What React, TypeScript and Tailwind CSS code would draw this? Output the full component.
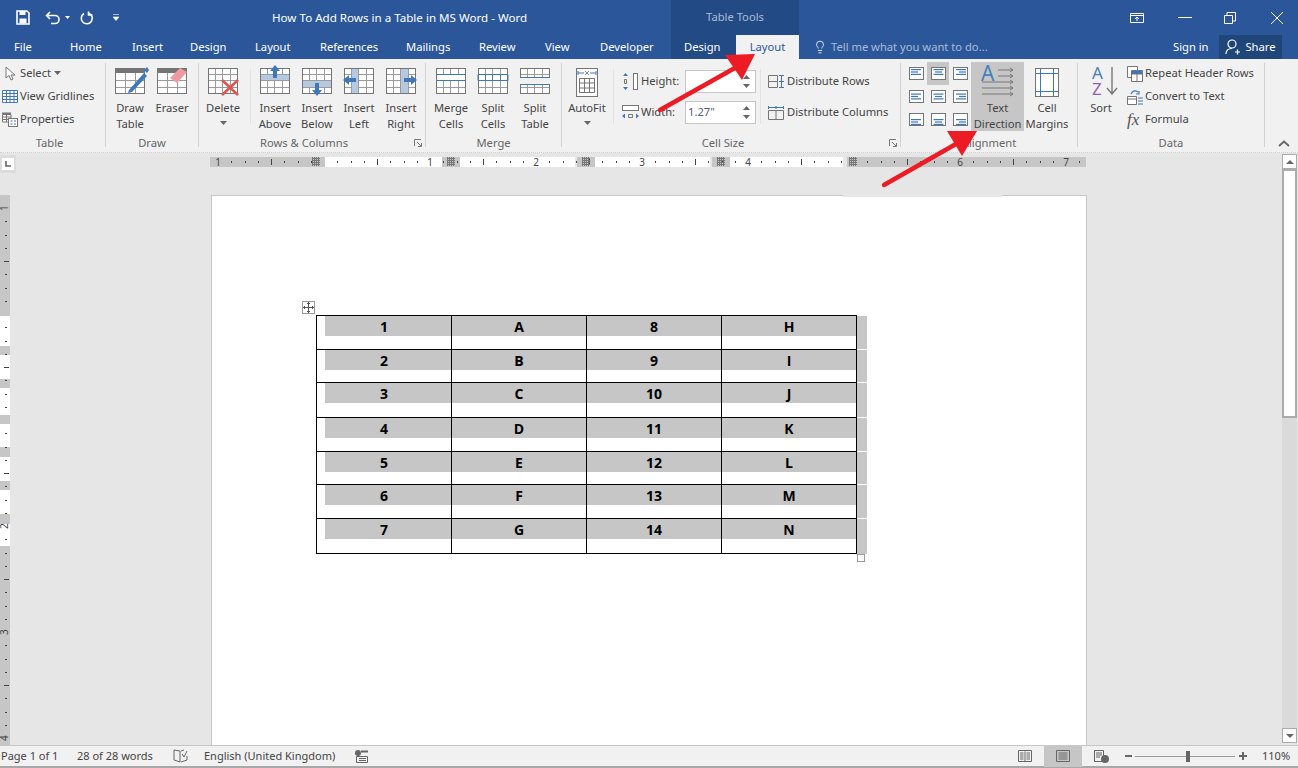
import type { ReactNode } from "react";
import { Lightbulb } from "lucide-react";

const tabs = [
  { label: "File", w: "w-[56px]" },
  { label: "Home", w: "w-[62px]" },
  { label: "Insert", w: "w-[58px]" },
  { label: "Design", w: "w-[65px]" },
  { label: "Layout", w: "w-[65px]" },
  { label: "References", w: "w-[86px]" },
  { label: "Mailings", w: "w-[73px]" },
  { label: "Review", w: "w-[66px]" },
  { label: "View", w: "w-[55px]" },
  { label: "Developer", w: "w-[71px]" },
];

const rows = [
  { h: "h-[34px]", cells: ["1", "A", "8", "H"] },
  { h: "h-[33px]", cells: ["2", "B", "9", "I"] },
  { h: "h-[35px]", cells: ["3", "C", "10", "J"] },
  { h: "h-[34px]", cells: ["4", "D", "11", "K"] },
  { h: "h-[33px]", cells: ["5", "E", "12", "L"] },
  { h: "h-[34px]", cells: ["6", "F", "13", "M"] },
  { h: "h-[36px]", cells: ["7", "G", "14", "N"] },
];

const GRAY = "#757575";
const BLUE = "#3f78b8";
const LIGHT = "#b5c9e0";

// plain table drawing used by most of the big ribbon buttons
function Grid({ children, header, simple }: { children?: ReactNode; header?: boolean; simple?: boolean }) {
  const vs = simple ? [10.5, 20.5] : [7.5, 14.5, 22.5];
  const hs = simple ? [12.5, 19.5] : [6.5, 12.5, 19.5];
  return (
    <svg width="30" height="27" viewBox="0 0 30 27" className="overflow-visible">
      <rect x="0.5" y="0.5" width="29" height="25" fill="#fff" stroke={GRAY} />
      {header && <rect x="0" y="0" width="30" height="5" fill={GRAY} />}
      {vs.map((x) => (
        <path key={x} d={`M${x} ${header ? 5 : 1}V25`} stroke="#9a9a9a" />
      ))}
      {hs.map((y) => (
        <path key={y} d={`M1 ${y}H29`} stroke="#9a9a9a" />
      ))}
      {children}
    </svg>
  );
}

function BigButton({ icon, lines, caret, w = "w-[42px]" }: { icon: ReactNode; lines: string[]; caret?: boolean; w?: string }) {
  return (
    <div className={`${w} flex flex-col items-center`}>
      <div className="h-[37px] pt-[5px] flex justify-center">{icon}</div>
      {lines.map((l) => (
        <div key={l} className="h-[16px] leading-[16px] whitespace-nowrap">
          {l}
        </div>
      ))}
      {caret && <Caret className="mt-[5px]" />}
    </div>
  );
}

function Caret({ className = "" }: { className?: string }) {
  return (
    <svg width="7" height="4" viewBox="0 0 7 4" className={className}>
      <path d="M0 0H7L3.5 4Z" fill="#666" />
    </svg>
  );
}

function SmallItem({ icon, label }: { icon: ReactNode; label: ReactNode }) {
  return (
    <div className="h-[23px] flex items-center whitespace-nowrap">
      <span className="w-[18px] flex items-center shrink-0">{icon}</span>
      {label}
    </div>
  );
}

function Group({ w, label, labelClass = "", launcher, children }: { w: string; label: string; labelClass?: string; launcher?: boolean; children: ReactNode }) {
  return (
    <div className={`${w} relative shrink-0`}>
      <div className="h-[72px] flex">{children}</div>
      <div className={`h-[16px] leading-[16px] text-center text-[#666] ${labelClass}`}>{label}</div>
      {launcher && (
        <svg width="8" height="8" viewBox="0 0 8 8" className="absolute right-[3px] bottom-[4px]">
          <path d="M0.5 7V0.5H7M3 3L7 7M4 7.5H7.5V4" fill="none" stroke="#777" />
        </svg>
      )}
    </div>
  );
}

function Sep() {
  return <div className="w-px h-[84px] bg-[#d2d2d2] shrink-0" />;
}

function AlignIcon({ y, align }: { y: number; align: number }) {
  const lines = [0, 1, 2].map((i) => {
    const w = i === 1 ? 7 : 10;
    const x = align === 0 ? 2 : align === 1 ? (15 - w) / 2 : 13 - w;
    return <rect key={i} x={x} y={y + i * 2.4} width={w} height="1.2" fill={BLUE} />;
  });
  return (
    <svg width="15" height="13" viewBox="0 0 15 13">
      <rect x="0.5" y="0.5" width="14" height="12" fill="#fff" stroke={GRAY} />
      {lines}
    </svg>
  );
}

function HRuler() {
  const segs = [
    [325, 117, "#fff"],
    [442, 18, "#c6c6c6"],
    [460, 115, "#fff"],
    [577, 18, "#c6c6c6"],
    [595, 115, "#fff"],
    [712, 18, "#c6c6c6"],
    [730, 113, "#fff"],
    [847, 239, "#c6c6c6"],
  ] as const;
  const ticks = Array.from({ length: 66 }, (_, i) => 218 + i * 13.25);
  const labels = [
    [218, "1"],
    [430, "1"],
    [536, "2"],
    [642, "3"],
    [748, "4"],
    [960, "6"],
    [1066, "7"],
  ] as const;
  return (
    <svg width="876" height="10" viewBox="210 0 876 10" className="block overflow-visible">
      <rect x="210" y="0" width="115" height="10" fill="#c6c6c6" />
      {segs.map(([x, w, c]) => (
        <rect key={x} x={x} y="0" width={w} height="10" fill={c} />
      ))}
      {ticks.map((x, i) =>
        i % 8 === 0 ? null : (
          <rect key={x} x={Math.round(x)} y={i % 4 === 0 ? 2 : 4} width="1" height={i % 4 === 0 ? 6 : 2} fill="#444" />
        )
      )}
      {labels.map(([x, t]) => (
        <text key={x} x={x} y="8.5" textAnchor="middle" fontSize="10" fill="#444" fontFamily="Noto Sans, sans-serif">
          {t}
        </text>
      ))}
      {[316, 451, 586, 721, 853].map((x) => (
        <path
          key={x}
          d={`M${x - 4} 1.5h8M${x - 4} 3.5h8M${x - 4} 5.5h8M${x - 4} 7.5h8M${x - 3.5} 0v9M${x - 1.5} 0v9M${x + 0.5} 0v9M${x + 2.5} 0v9`}
          stroke="#777"
          strokeWidth="1"
          fill="none"
        />
      ))}
    </svg>
  );
}

function VRuler() {
  // y values are page coordinates, the ruler begins at y=195
  const whites = [
    [316, 346],
    [355, 379],
    [388, 415],
    [424, 447],
    [457, 481],
    [490, 514],
    [524, 546],
  ];
  const ticks = Array.from({ length: 42 }, (_, i) => 208 + i * 13.25);
  return (
    <svg width="10" height="550" viewBox="0 195 10 550" className="block overflow-visible shrink-0">
      <rect x="0" y="195" width="10" height="550" fill="#c6c6c6" />
      {whites.map(([a, b]) => (
        <rect key={a} x="0" y={a} width="10" height={b - a} fill="#fff" />
      ))}
      {ticks.map((y, i) => {
        if (i % 8 === 0) return null;
        const long = i % 4 === 0;
        return <rect key={y} x={long ? 4 : 5} y={Math.round(y)} width={long ? 5 : 2} height="1" fill="#444" />;
      })}
      {[
        [208, "1"],
        [526, "2"],
        [632, "3"],
        [738, "4"],
      ].map(([y, t]) => (
        <text
          key={t}
          x="5"
          y={Number(y)}
          transform={`rotate(-90 5 ${y})`}
          textAnchor="middle"
          dominantBaseline="middle"
          fontSize="10"
          fill="#444"
          fontFamily="Noto Sans, sans-serif"
        >
          {t}
        </text>
      ))}
    </svg>
  );
}

export default function App() {
  return (
    <div className="relative w-[1298px] h-[768px] overflow-hidden bg-[#e6e6e6] font-['Noto_Sans',sans-serif] text-[11.2px] text-[#444] flex flex-col">
      {/* Title bar */}
      <div className="h-[35px] bg-[#2b579a] flex text-white shrink-0">
        <div className="w-[272px] flex items-center pl-[16px]">
          <svg width="14" height="15" viewBox="0 0 14 15">
            <path d="M1 1H11L13 3V14H1Z" fill="none" stroke="#fff" strokeWidth="1.6" />
            <rect x="3.5" y="1" width="6" height="4" fill="#fff" />
            <rect x="3.5" y="8.5" width="7" height="5" fill="#fff" />
          </svg>
          <svg width="16" height="14" viewBox="0 0 16 14" className="ml-[15px]">
            <path d="M1.5 4.5H10a4 4 0 0 1 0 8H6M5 1L1.5 4.5L5 8" fill="none" stroke="#fff" strokeWidth="1.6" />
          </svg>
          <svg width="5" height="3" viewBox="0 0 5 3" className="ml-[4px]">
            <path d="M0 0H5L2.5 3Z" fill="#fff" />
          </svg>
          <svg width="14" height="14" viewBox="0 0 14 14" className="ml-[10px]">
            <path d="M9 2.2A5.5 5.5 0 1 1 4 2.5M8.5 0.5V4H12.5" fill="none" stroke="#fff" strokeWidth="1.6" />
          </svg>
          <svg width="6" height="7" viewBox="0 0 6 7" className="ml-[19px]">
            <path d="M0 0.5H6M0 3H6L3 6.5Z" fill="#fff" stroke="#fff" strokeWidth="0.6" />
          </svg>
        </div>
        <div className="w-[399px] flex items-center whitespace-nowrap text-[11.6px]">How To Add Rows in a Table in MS Word - Word</div>
        <div className="w-[128px] bg-[#224a85] flex items-center justify-center text-[#a9bcd8]">Table Tools</div>
        <div className="flex-1 flex items-center">
          <svg width="14" height="10" viewBox="0 0 14 10" className="ml-[331px]">
            <path d="M0.5 0.5H13.5V9.5H0.5ZM0.5 2.5H13.5M7 8V4M5 6L7 4L9 6" fill="none" stroke="#fff" />
          </svg>
          <div className="ml-[34px] w-[14px] h-px bg-white" />
          <svg width="12" height="12" viewBox="0 0 12 12" className="ml-[32px]">
            <path d="M0.5 3.5H8.5V11.5H0.5ZM3 3.5V0.5H11.5V9H8.5" fill="none" stroke="#fff" />
          </svg>
          <svg width="14" height="14" viewBox="0 0 14 14" className="ml-[34px]">
            <path d="M1 1L13 13M13 1L1 13" stroke="#fff" />
          </svg>
        </div>
      </div>

      {/* Tabs */}
      <div className="h-[24px] bg-[#2b579a] flex text-white shrink-0">
        <div className="flex pl-[14px]">
          {tabs.map((t) => (
            <div key={t.label} className={`${t.w} leading-[24px]`}>
              {t.label}
            </div>
          ))}
        </div>
        <div className="w-[65px] bg-[#224a85] pl-[13px] leading-[24px]">Design</div>
        <div className="w-[63px] bg-[#f1f1f1] text-center leading-[24px] text-[#2b579a]">Layout</div>
        <div className="flex items-center pl-[14px] text-[#a9bcd8] whitespace-nowrap w-[374px]">
          <Lightbulb size={14} strokeWidth={1.4} className="text-white mr-[4px]" />
          Tell me what you want to do...
        </div>
        <div className="leading-[24px] w-[46px] whitespace-nowrap">Sign in</div>
        <div className="w-[63px] bg-[#1f4679] flex items-center justify-center gap-[4px]">
          <svg width="16" height="16" viewBox="0 0 16 16">
            <circle cx="7" cy="5" r="4" fill="none" stroke="#fff" strokeWidth="1.2" />
            <path d="M1 15C1 11 4 9.5 7 9.5M10 13H15M12.5 10.5V15.5" fill="none" stroke="#fff" strokeWidth="1.2" />
          </svg>
          Share
        </div>
      </div>

      {/* Ribbon */}
      <div className="h-[94px] bg-[#f1f1f1] border-b border-dotted border-[#cfcfcf] flex items-start pt-[4px] shrink-0 relative">
        <Group w="w-[105px]" label="Table" labelClass="pr-[6px]">
          <div className="flex flex-col -mt-px pl-[2px]">
            <SmallItem
              icon={
                <svg width="12" height="15" viewBox="0 0 12 15" className="ml-[3px]">
                  <path d="M1 1V12L4 9.5L6 14L8 13L6 9H10Z" fill="#fff" stroke="#777" />
                </svg>
              }
              label={
                <span className="flex items-center gap-[3px]">
                  Select <Caret />
                </span>
              }
            />
            <SmallItem
              icon={
                <svg width="16" height="13" viewBox="0 0 16 13">
                  <path d="M0.5 0.5H15.5V12.5H0.5ZM0.5 3.5H15.5M0.5 6.5H15.5M0.5 9.5H15.5M4.5 0.5V12.5M8 0.5V12.5M12 0.5V12.5" fill="#fff" stroke={BLUE} />
                </svg>
              }
              label="View Gridlines"
            />
            <SmallItem
              icon={
                <svg width="16" height="15" viewBox="0 0 16 15">
                  <path d="M0.5 2.5H9V10H0.5ZM0.5 5H9M0.5 7.5H9M4.5 2.5V10" fill="#fff" stroke={GRAY} />
                  <rect x="0" y="0.5" width="9" height="2" fill={GRAY} />
                  <rect x="6.5" y="6.5" width="9" height="8" fill="#fff" stroke={GRAY} />
                  <path d="M8.5 9H10.5M12 9H14M8.5 12H10.5M12 12H14" stroke={BLUE} />
                </svg>
              }
              label="Properties"
            />
          </div>
        </Group>
        <Sep />
        <Group w="w-[92px]" label="Draw">
          <div className="flex pl-[3px]">
            <BigButton
              lines={["Draw", "Table"]}
              icon={
                <Grid header simple>
                  <path d="M14 22L29 5L32 8L17 24L13 25Z" fill={BLUE} />
                  <path d="M29 2L32 -1L34 2L32 5Z" fill={BLUE} />
                </Grid>
              }
            />
            <BigButton
              lines={["Eraser"]}
              icon={
                <Grid header simple>
                  <path d="M13 10L23 0L30 4L20 15Z" fill="#ee9aa0" />
                </Grid>
              }
            />
          </div>
        </Group>
        <Sep />
        <Group w="w-[226px]" label="Rows & Columns" labelClass="pr-[16px]" launcher>
          <BigButton
            w="w-[48px]"
            lines={["Delete"]}
            caret
            icon={
              <Grid>
                <path d="M14 12L30 27M30 12L14 27" stroke="#e0564f" strokeWidth="2.6" />
              </Grid>
            }
          />
          <div className="w-[7px] flex justify-center pt-[6px]">
            <div className="w-px h-[55px] bg-[#e2e2e2]" />
          </div>
          <BigButton
            lines={["Insert", "Above"]}
            icon={
              <Grid>
                <rect x="1" y="7" width="28" height="5" fill={LIGHT} />
                <path d="M15 -3L10 3H13V10H17V3H20Z" fill={BLUE} />
              </Grid>
            }
          />
          <BigButton
            lines={["Insert", "Below"]}
            icon={
              <Grid>
                <rect x="1" y="13" width="28" height="6" fill={LIGHT} />
                <path d="M15 28L10 22H13V15H17V22H20Z" fill={BLUE} />
              </Grid>
            }
          />
          <BigButton
            lines={["Insert", "Left"]}
            icon={
              <Grid>
                <rect x="8" y="1" width="6" height="24" fill={LIGHT} />
                <path d="M-1 12L5 7V10H12V14H5V17Z" fill={BLUE} />
              </Grid>
            }
          />
          <BigButton
            lines={["Insert", "Right"]}
            icon={
              <Grid>
                <rect x="15" y="1" width="7" height="24" fill={LIGHT} />
                <path d="M31 12L25 7V10H18V14H25V17Z" fill={BLUE} />
              </Grid>
            }
          />
        </Group>
        <Sep />
        <Group w="w-[135px]" label="Merge">
          <div className="flex pl-[4px]">
            <BigButton
              lines={["Merge", "Cells"]}
              icon={
                <Grid>
                  <rect x="1" y="7" width="28" height="5" fill="#fff" />
                  <path d="M0 6.5H30M0 12.5H30" stroke={BLUE} />
                </Grid>
              }
            />
            <BigButton
              lines={["Split", "Cells"]}
              icon={
                <Grid>
                  <path d="M0 6.5H30V12.5H0ZM7.5 7V12M14.5 7V12M22.5 7V12" fill="none" stroke={BLUE} />
                </Grid>
              }
            />
            <BigButton
              lines={["Split", "Table"]}
              icon={
                <Grid>
                  <rect x="0" y="10" width="30" height="6" fill="#f1f1f1" />
                  <path d="M0 9.5H30M0 16.5H30" stroke={BLUE} />
                </Grid>
              }
            />
          </div>
        </Group>
        <Sep />
        <Group w="w-[338px]" label="Cell Size" labelClass="pr-[16px]" launcher>
          <BigButton
            w="w-[50px]"
            lines={["AutoFit"]}
            caret
            icon={
              <svg width="22" height="30" viewBox="0 0 22 30">
                <rect x="0.5" y="0.5" width="21" height="28" fill="#fff" stroke={GRAY} />
                <path d="M2 5H8M14 5H20M2 3V7M20 3V7" stroke={BLUE} />
                <path d="M9 3L13 7M13 3L9 7" stroke="#888" />
                <path d="M3.5 10.5H18.5V24.5H3.5ZM3.5 15H18.5M3.5 20H18.5M8.5 10.5V24.5M13.5 10.5V24.5" fill="none" stroke={GRAY} />
              </svg>
            }
          />
          <div className="w-[7px] ml-[-2px] mr-[5px] flex justify-center pt-[6px]">
            <div className="w-px h-[55px] bg-[#e2e2e2]" />
          </div>
          <div className="flex flex-col pt-[7px] gap-[8px] w-[138px]">
            <div className="h-[23px] flex items-center">
              <svg width="17" height="17" viewBox="0 0 17 17">
                <path d="M3.5 0L1 3H6ZM3.5 17L1 14H6Z" fill={BLUE} />
                <path d="M2.5 6.5H4.5V10.5H2.5Z" fill="none" stroke={GRAY} />
                <rect x="11.5" y="0.5" width="4" height="16" fill="#fff" stroke={GRAY} />
              </svg>
              <span className="w-[44px] ml-[2px]">Height:</span>
              <div className="w-[71px] h-[23px] bg-white border border-[#c6c6c6] flex justify-end items-center pr-[5px]">
                <div className="flex flex-col gap-[5px]">
                  <Caret className="rotate-180" />
                  <Caret />
                </div>
              </div>
            </div>
            <div className="h-[23px] flex items-center">
              <svg width="17" height="17" viewBox="0 0 17 17">
                <rect x="0.5" y="1.5" width="16" height="5" fill="#fff" stroke={GRAY} />
                <path d="M0 12L3 9.5V14.5ZM17 12L14 9.5V14.5Z" fill={BLUE} />
                <path d="M6.5 10.5H10.5V13.5H6.5Z" fill="none" stroke={GRAY} />
              </svg>
              <span className="w-[44px] ml-[2px]">Width:</span>
              <div className="w-[71px] h-[23px] bg-white border border-[#c6c6c6] flex justify-between items-center pl-[2px] pr-[5px]">
                <span className="text-[#555a8a]">1.27"</span>
                <div className="flex flex-col gap-[5px]">
                  <Caret className="rotate-180" />
                  <Caret />
                </div>
              </div>
            </div>
          </div>
          <div className="w-px h-[55px] mt-[6px] bg-[#e2e2e2]" />
          <div className="flex flex-col pt-[7px] pl-[7px] gap-[8px] whitespace-nowrap">
            <div className="h-[23px] flex items-center gap-[3px]">
              <svg width="16" height="14" viewBox="0 0 16 14">
                <path d="M0.5 0.5H9.5V12.5H0.5ZM0.5 6.5H9.5" fill="none" stroke={GRAY} />
                <path d="M11 0.5H16M13.5 0.5V12.5M11 6.5H16M11 12.5H16" fill="none" stroke={BLUE} />
              </svg>
              Distribute Rows
            </div>
            <div className="h-[23px] flex items-center gap-[3px]">
              <svg width="16" height="14" viewBox="0 0 16 14">
                <path d="M0.5 4.5H15.5V13.5H0.5ZM8 4.5V13.5" fill="none" stroke={GRAY} />
                <path d="M0.5 0V3M8 0V3M15.5 0V3M0 1.5H16" fill="none" stroke={BLUE} />
              </svg>
              Distribute Columns
            </div>
          </div>
        </Group>
        <Sep />
        <Group w="w-[176px]" label="Alignment">
          <div className="grid grid-cols-[22px_22px_22px] grid-rows-[23px_23px_23px] ml-[4px] -mt-px">
            {[0, 1, 2].flatMap((r) =>
              [0, 1, 2].map((c) => (
                <div key={`${r}-${c}`} className={`flex items-center justify-center ${r === 0 && c === 1 ? "bg-[#c6c6c6]" : ""}`}>
                  <AlignIcon y={[2, 3.5, 6][r]} align={c} />
                </div>
              ))
            )}
          </div>
          <div className="w-[53px] h-[69px] -mt-px bg-[#c6c6c6] flex flex-col items-center">
            <div className="h-[38px] w-full relative">
              <span className="absolute left-[10px] top-[-7px] text-[21px] leading-[36px] text-[#4a7ebb]">A</span>
              <svg width="32" height="32" viewBox="0 0 32 32" className="absolute left-[11px] top-[5px]">
                <path d="M16 3H31M16 9H31M0 15H31M0 21H31M0 27H31M28 1L31 3L28 5M28 7L31 9L28 11M28 13L31 15L28 17M28 19L31 21L28 23M28 25L31 27L28 29" fill="none" stroke="#777" />
              </svg>
            </div>
            <div className="h-[16px] leading-[16px]">Text</div>
            <div className="h-[15px] leading-[16px]">Direction</div>
          </div>
          <BigButton
            w="w-[46px]"
            lines={["Cell", "Margins"]}
            icon={
              <svg width="24" height="30" viewBox="0 0 24 30">
                <rect x="0.5" y="0.5" width="23" height="28" fill="#fff" stroke={GRAY} />
                <path d="M5.5 1V28M18.5 1V28M1 5.5H23M1 23.5H23" stroke={BLUE} />
              </svg>
            }
          />
        </Group>
        <Sep />
        <Group w="w-[186px]" label="Data">
          <div className="w-[46px] flex flex-col items-center">
            <div className="h-[37px] w-full relative">
              <span className="absolute left-[14px] top-[2px] text-[17px] leading-[15px] text-[#4a7ebb]">A</span>
              <span className="absolute left-[14px] top-[18px] text-[17px] leading-[15px] text-[#8f63b8]">Z</span>
              <svg width="12" height="28" viewBox="0 0 12 28" className="absolute left-[28px] top-[4px]">
                <path d="M6 0V27M1 21L6 27L11 21" fill="none" stroke="#777" strokeWidth="1.4" />
              </svg>
            </div>
            <div className="h-[16px] leading-[16px]">Sort</div>
          </div>
          <div className="flex flex-col -mt-px ml-[3px]">
            <SmallItem
              icon={
                <svg width="16" height="16" viewBox="0 0 16 16">
                  <path d="M0.5 0.5H10.5V11.5H0.5Z" fill="#fff" stroke={GRAY} />
                  <path d="M4.5 4.5H15.5V15.5H4.5ZM4.5 8H15.5M10 4.5V15.5" fill="#fff" stroke={GRAY} />
                  <rect x="5" y="5" width="10" height="3" fill={BLUE} />
                </svg>
              }
              label="Repeat Header Rows"
            />
            <SmallItem
              icon={
                <svg width="16" height="16" viewBox="0 0 16 16">
                  <path d="M0.5 7.5H9.5V15.5H0.5ZM0.5 10H9.5" fill="#fff" stroke={GRAY} />
                  <path d="M11 9H16M11 12H16M11 15H16" stroke={BLUE} />
                  <path d="M4 5C5 2 8 1 11 3M9 5H12V2" fill="none" stroke={BLUE} strokeWidth="1.2" />
                </svg>
              }
              label="Convert to Text"
            />
            <SmallItem
              icon={<span className="font-['Liberation_Serif',serif] italic text-[17px] leading-[16px] text-[#555]">fx</span>}
              label="Formula"
            />
          </div>
        </Group>
        <Sep />
        <svg width="12" height="7" viewBox="0 0 12 7" className="absolute left-[1278px] top-[81px]">
          <path d="M1 6L6 1.5L11 6" fill="none" stroke="#666" strokeWidth="1.8" />
        </svg>
      </div>

      {/* Document area */}
      <div className="flex-1 min-h-0 flex">
        <div className="flex-1 min-w-0 flex flex-col">
          <div className="h-[42px] flex shrink-0">
            <div className="w-[16px] h-[18px] mt-[2px] bg-[#dcdcdc] flex items-center justify-center">
              <div className="w-[12px] h-[12px] bg-white flex items-center justify-center">
                <svg width="6" height="6" viewBox="0 0 6 6">
                  <path d="M1 0V5H6" fill="none" stroke="#666" strokeWidth="1.6" />
                </svg>
              </div>
            </div>
            <div className="ml-[194px] mt-[4px]">
              <HRuler />
            </div>
          </div>
          <div className="flex-1 min-h-0 flex">
            <VRuler />
            <div className="ml-[201px] w-[876px] h-[560px] bg-white border border-[#c6c6c6] pl-[104px] pt-[119px]">
              <div className="relative w-[552px]">
                <div className="absolute left-[-14px] top-[-14px] w-[13px] h-[13px] border border-[#9a9a9a] flex items-center justify-center">
                  <svg width="11" height="11" viewBox="0 0 11 11">
                    <path d="M5.5 0V11M0 5.5H11M4 1.5H7M4 9.5H7M1.5 4V7M9.5 4V7" stroke="#555" />
                  </svg>
                </div>
                {rows.map((row, i) => (
                  <div key={row.cells[0]} className={`${row.h} flex`}>
                    <div className={`w-[541px] flex border-x border-t border-black ${i === rows.length - 1 ? "border-b" : ""}`}>
                      {row.cells.map((c, j) => (
                        <div key={c} className={`${j < 3 ? "w-[135px] border-r border-black" : "flex-1"}`}>
                          <div className={`h-[20px] bg-[#c6c6c6] text-center text-black font-bold text-[14px] leading-[21px] font-['Open_Sans',sans-serif] ${j === 0 ? "ml-[8px] pr-[8px]" : ""}`}>{c}</div>
                        </div>
                      ))}
                    </div>
                    <div className="w-[10px] bg-[#c6c6c6] border-t border-white" />
                  </div>
                ))}
                <div className="absolute left-[541px] top-[239px] w-[8px] h-[8px] border border-[#9a9a9a] bg-white" />
              </div>
            </div>
          </div>
        </div>

        {/* Scrollbar */}
        <div className="w-[15px] mr-px shrink-0 flex flex-col pt-px">
          <div className="h-[15px] bg-white border border-[#ababab] flex items-center justify-center">
            <svg width="8" height="4" viewBox="0 0 8 4">
              <path d="M0 4H8L4 0Z" fill="#666" />
            </svg>
          </div>
          <div className="h-[249px] bg-white border-2 border-[#ababab]" />
          <div className="flex-1 bg-[#dadada]" />
          <div className="h-[15px] mb-[2px] bg-white border border-[#ababab] flex items-center justify-center">
            <svg width="8" height="4" viewBox="0 0 8 4">
              <path d="M0 0H8L4 4Z" fill="#666" />
            </svg>
          </div>
        </div>
      </div>

      {/* Status bar */}
      <div className="h-[23px] bg-[#f1f1f1] border-t border-[#c6c6c6] border-b-2 border-b-[#a8a8a8] flex items-center shrink-0 whitespace-nowrap text-[11px] text-[#444] box-border">
        <span className="ml-px w-[76px]">Page 1 of 1</span>
        <span className="w-[96px]">28 of 28 words</span>
        <svg width="15" height="14" viewBox="0 0 15 14">
          <path d="M7 2V13L1 11V1ZM8 13L14 11V7M8 2L11 1" fill="none" stroke="#666" />
          <path d="M9 5L11 8L14 2" fill="none" stroke="#666" />
        </svg>
        <span className="ml-[16px] w-[151px]">English (United Kingdom)</span>
        <svg width="13" height="13" viewBox="0 0 13 13">
          <circle cx="3" cy="3" r="3" fill="#666" />
          <path d="M6 1.5H13" stroke="#666" strokeWidth="2" />
          <path d="M1.5 6.5H12.5V12.5H1.5ZM4 8.5H11M4 10.5H11" fill="none" stroke="#666" />
        </svg>
        <div className="flex-1" />
        <svg width="14" height="13" viewBox="0 0 14 13">
          <path d="M7 1.5V12M0.5 0.5H13.5V11.5H0.5ZM2 3H5.5M2 5H5.5M2 7H5.5M2 9H5.5M8.5 3H12M8.5 5H12M8.5 7H12M8.5 9H12" fill="none" stroke="#666" />
        </svg>
        <div className="ml-[12px] w-[38px] h-[21px] bg-[#c6c6c6] flex items-center justify-center">
          <svg width="14" height="12" viewBox="0 0 14 12">
            <path d="M0.5 0.5H13.5V11.5H0.5ZM2.5 3H11.5M2.5 5H11.5M2.5 7H11.5M2.5 9H11.5" fill="none" stroke="#666" />
          </svg>
        </div>
        <svg width="15" height="13" viewBox="0 0 15 13" className="ml-[12px]">
          <path d="M0.5 0.5H9.5V11.5H0.5ZM2 3H8M2 5H8M2 7H6" fill="none" stroke="#666" />
          <circle cx="11" cy="9" r="4" fill="#666" />
        </svg>
        <div className="ml-[16px] w-[7px] h-[2px] bg-[#666]" />
        <div className="ml-[3px] w-[100px] h-px bg-[#9a9a9a] relative">
          <div className="absolute left-[51px] top-[-5px] w-[4px] h-[11px] bg-[#666]" />
        </div>
        <svg width="8" height="8" viewBox="0 0 8 8" className="ml-[4px]">
          <path d="M4 0V8M0 4H8" stroke="#666" strokeWidth="2" />
        </svg>
        <span className="ml-[15px] w-[36px]">110%</span>
      </div>

      {/* Red annotation arrows and the pasted patch over the ribbon */}
      <svg width="1298" height="768" viewBox="0 0 1298 768" className="absolute left-0 top-0 pointer-events-none">
        <rect x="843" y="195" width="160" height="2" fill="#e6e6e6" />
        <path d="M660 110L742 64" stroke="#ed1c24" strokeWidth="4.5" strokeLinecap="round" />
        <path d="M755 54L725 55L742 80Z" fill="#ed1c24" />
        <path d="M884 185L963 140" stroke="#ed1c24" strokeWidth="4.5" strokeLinecap="round" />
        <path d="M977 131L947 131L962 156Z" fill="#ed1c24" />
      </svg>
    </div>
  );
}
